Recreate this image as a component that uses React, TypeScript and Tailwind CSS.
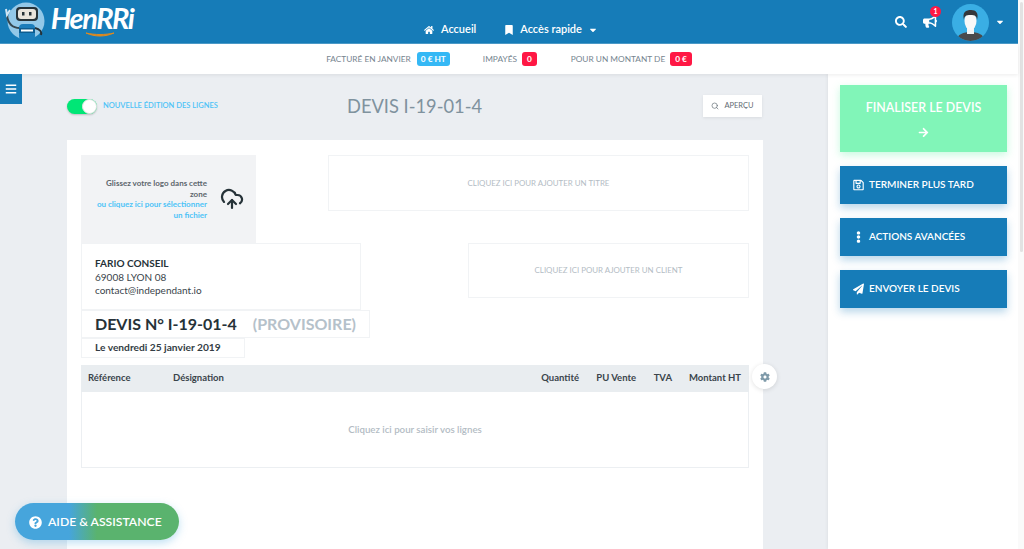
import { CloudUpload, Search } from 'lucide-react';
import {
  FaArrowRight,
  FaBars,
  FaBookmark,
  FaBullhorn,
  FaCaretDown,
  FaCog,
  FaEllipsisV,
  FaHome,
  FaPaperPlane,
  FaQuestionCircle,
  FaRegSave,
  FaSearch,
} from 'react-icons/fa';

const COLUMNS = [
  { label: 'Quantité', width: 'w-[58px]' },
  { label: 'PU Vente', width: 'w-[57px]' },
  { label: 'TVA', width: 'w-[36px]' },
  { label: 'Montant HT', width: 'w-[69px]' },
];

const ACTIONS = [
  { icon: FaRegSave, label: 'TERMINER PLUS TARD' },
  { icon: FaEllipsisV, label: 'ACTIONS AVANCÉES' },
  { icon: FaPaperPlane, label: 'ENVOYER LE DEVIS' },
];

function RobotLogo() {
  return (
    <svg viewBox="0 0 46 42" className="w-[46px] h-[42px] shrink-0">
      <circle cx="25" cy="20" r="18.500" fill="#93c8e8" />
      <path d="M6 14 C7 24 12 27 19 27" fill="none" stroke="#37474f" strokeWidth="2" />
      <path d="M5 8 L6 14 L9 9" fill="none" stroke="#cfe6f5" strokeWidth="2" />
      <path d="M34 27 C39 28 41 31 40 34" fill="none" stroke="#263238" strokeWidth="2" />
      <rect x="15" y="6" width="22" height="14" rx="4" fill="#263238" />
      <rect x="17" y="8" width="18" height="10" rx="3" fill="#e8e4dc" />
      <rect x="21" y="11" width="2.500" height="3.500" fill="#263238" />
      <rect x="28" y="11" width="2.500" height="3.500" fill="#263238" />
      <rect x="18" y="23" width="16" height="16" rx="4" fill="#1b7dbb" />
      <rect x="18" y="27" width="16" height="5" fill="#0e5d91" />
      <rect x="20" y="28.500" width="12" height="2" fill="#ffffff" />
    </svg>
  );
}

function Avatar() {
  return (
    <svg viewBox="0 0 37 37" className="w-[37px] h-[37px] rounded-full">
      <rect width="37" height="37" fill="#3aaee4" />
      <path d="M4 37 C5 30 12 28 18.500 28 C25 28 32 30 33 37 Z" fill="#4a4a4c" />
      <rect x="15" y="23" width="7" height="7" fill="#f4f4f4" />
      <ellipse cx="18.500" cy="17" rx="6" ry="9" fill="#f8f8f8" />
      <path d="M12 16 C10 8 14 6 19 6 C24 6 27 9 25 16 C25 12 23 11 18.500 11 C14 11 12 12 12 16 Z" fill="#33373b" />
    </svg>
  );
}

function TopBar() {
  return (
    <header className="relative flex h-[44px] shrink-0 items-center bg-[#167cb8] border-b border-[#4d9ccb] pl-[1px] pr-[14px] text-white">
      <RobotLogo />
      <span className="ml-[5px] -mt-[4px] flex w-[80px] shrink-0 flex-col items-center font-['Lato',sans-serif] text-[29px] leading-[32px] font-bold italic tracking-[-1.500px] whitespace-nowrap">
        <span>HenRRi</span>
        <svg viewBox="0 0 30 5" className="-mt-[2px] ml-[16px] w-[30px] h-[5px]">
          <path d="M1 1 C10 5 20 5 29 1 C20 3 10 3 1 1 Z" fill="#e08a1e" stroke="#e08a1e" />
        </svg>
      </span>

      <nav className="ml-[292px] mt-[16px] flex items-center text-[11px] font-semibold">
        <FaHome className="w-[10px] h-[10px]" />
        <span className="ml-[7px]">Accueil</span>
        <FaBookmark className="ml-[29px] w-[8px] h-[10px]" />
        <span className="ml-[7px]">Accès rapide</span>
        <FaCaretDown className="ml-[7px] w-[8px] h-[10px]" />
      </nav>

      <div className="ml-auto flex items-center">
        <FaSearch className="w-[12px] h-[12px]" />
        <span className="relative ml-[16px]">
          <FaBullhorn className="w-[14px] h-[13px]" />
          <span className="absolute -top-[9px] left-[7px] flex h-[11px] w-[11px] items-center justify-center rounded-full bg-[#ff1744] text-[7px] font-bold">
            1
          </span>
        </span>
        <span className="ml-[15px] mt-[1px]">
          <Avatar />
        </span>
        <FaCaretDown className="ml-[7px] w-[8px] h-[10px]" />
      </div>
    </header>
  );
}

function StatsBar() {
  return (
    <div className="relative z-10 flex h-[30px] shrink-0 items-center justify-center bg-white text-[8.300px] text-[#76858f] shadow-[0_1px_4px_rgba(0,0,0,0.08)]">
      <span>FACTURÉ EN JANVIER</span>
      <span className="ml-[6px] rounded-[3px] bg-[#35b8f5] px-[4px] py-[2px] font-bold text-white leading-[10px]">0 € HT</span>
      <span className="ml-[33px]">IMPAYÉS</span>
      <span className="ml-[5px] rounded-[3px] bg-[#ff1744] px-[5px] py-[2px] font-bold text-white leading-[10px]">0</span>
      <span className="ml-[34px]">POUR UN MONTANT DE</span>
      <span className="ml-[5px] rounded-[3px] bg-[#ff1744] px-[5px] py-[2px] font-bold text-white leading-[10px]">0 €</span>
    </div>
  );
}

function Toolbar() {
  return (
    <div className="flex h-[66px] w-[763px] shrink-0 items-center pl-[67px]">
      <div className="-mt-[2px] flex w-[280px] items-center">
        <span className="relative h-[15px] w-[30px] rounded-full bg-[#00e676] shadow-[0_1px_2px_rgba(0,0,0,0.2)]">
          <span className="absolute right-0 top-0 h-[15px] w-[15px] rounded-full border border-[#e4e4e4] bg-white" />
        </span>
        <span className="ml-[6px] text-[7.500px] font-semibold text-[#4dc3f7]">NOUVELLE ÉDITION DES LIGNES</span>
      </div>
      <h1 className="-mt-[1px] w-[356px] text-[18.300px] text-[#7f929e]">DEVIS I-19-01-4</h1>
      <button className="-mt-[2px] flex h-[22px] w-[59px] items-center justify-center gap-[5px] bg-white text-[7.500px] text-[#5f6b73] shadow-[0_1px_3px_rgba(0,0,0,0.08)]">
        <Search className="w-[8px] h-[8px]" strokeWidth={2} />
        APERÇU
      </button>
    </div>
  );
}

function QuoteCard() {
  return (
    <div className="relative ml-[67px] w-[696px] flex-1 bg-white px-[14px] pt-[15px]">
      <div className="flex items-start">
        <div className="flex h-[88px] w-[175px] items-center bg-[#f2f3f5] pl-[14px]">
          <div className="w-[112px] text-right text-[8px] font-bold leading-[10.500px]">
            <p className="text-[#5d666d]">Glissez votre logo dans cette zone</p>
            <p className="text-[#4dc3f7]">ou cliquez ici pour sélectionner un fichier</p>
          </div>
          <CloudUpload className="ml-[13px] w-[24px] h-[24px] text-[#263238]" strokeWidth={2.200} />
        </div>
        <div className="ml-[72px] flex h-[56px] w-[421px] items-center justify-center border border-[#f1f3f5] pt-[2px] text-[7.900px] text-[#b3bcc4]">
          CLIQUEZ ICI POUR AJOUTER UN TITRE
        </div>
      </div>

      <div className="flex items-start justify-between">
        <div className="h-[67px] w-[280px] border border-[#f1f3f5] pl-[13px] pt-[13px] text-[10px] leading-[13.500px] text-[#3a444b]">
          <p className="font-bold text-[#263238]">FARIO CONSEIL</p>
          <p>69008 LYON 08</p>
          <p>contact@independant.io</p>
        </div>
        <div className="flex h-[55px] w-[281px] items-center justify-center border border-[#f1f3f5] text-[7.900px] text-[#b3bcc4]">
          CLIQUEZ ICI POUR AJOUTER UN CLIENT
        </div>
      </div>

      <div className="flex h-[28px] w-[289px] items-center border border-[#f1f3f5] pl-[13px] text-[16px] font-bold">
        <span className="text-[#263238]">DEVIS N° I-19-01-4</span>
        <span className="ml-[16px] text-[#b5c1ca]">(PROVISOIRE)</span>
      </div>
      <div className="flex h-[20px] w-[164px] items-center border border-[#f1f3f5] pl-[13px] text-[10.200px] font-bold text-[#333d44]">
        Le vendredi 25 janvier 2019
      </div>

      <div className="mt-[7px] flex h-[27px] items-center bg-[#e9edf0] pl-[7px] pr-[8px] text-[9.500px] font-bold text-[#3a444b]">
        <span className="w-[85px]">Référence</span>
        <span className="flex-1">Désignation</span>
        {COLUMNS.map((col) => (
          <span key={col.label} className={`${col.width} text-right`}>{col.label}</span>
        ))}
      </div>
      <div className="flex h-[76px] items-center justify-center border border-t-0 border-[#eceff2] text-[9.700px] font-semibold text-[#b3bcc4]">
        Cliquez ici pour saisir vos lignes
      </div>

      <button className="absolute left-[685px] top-[224px] flex h-[25px] w-[25px] items-center justify-center rounded-full bg-white text-[#7f9aa9] shadow-[0_1px_5px_rgba(0,0,0,0.12)]">
        <FaCog className="w-[10px] h-[10px]" />
      </button>
    </div>
  );
}

function SidePanel() {
  return (
    <aside className="w-[190px] shrink-0 bg-white pl-[12px] pr-[11px] pt-[11px] shadow-[-1px_0_3px_rgba(0,0,0,0.05)]">
      <button className="flex h-[67px] w-[167px] flex-col items-center justify-center gap-[12px] bg-[#81f5b8] text-[12.400px] leading-[15px] font-semibold text-white shadow-[0_3px_8px_rgba(129,245,184,0.45)]">
        FINALISER LE DEVIS
        <FaArrowRight className="w-[11px] h-[11px]" />
      </button>
      <div className="mt-[14px] flex flex-col gap-[14px]">
        {ACTIONS.map((action) => (
          <button
            key={action.label}
            className="flex h-[38px] w-[167px] items-center bg-[#167cb8] pb-[1px] pl-[13px] text-[10px] font-semibold text-white shadow-[0_4px_8px_rgba(22,124,184,0.3)]"
          >
            <action.icon className="w-[11px] h-[12px]" />
            <span className="ml-[5px]">{action.label}</span>
          </button>
        ))}
      </div>
    </aside>
  );
}

export default function App() {
  return (
    <div className="relative flex h-[549px] w-[1024px] overflow-hidden bg-[#fdfdfd] font-['Lato',sans-serif]">
      <div className="flex w-[1018px] shrink-0 flex-col">
        <TopBar />
        <StatsBar />
        <div className="relative flex min-h-0 flex-1">
          <button className="absolute left-0 top-0 z-10 flex h-[30px] w-[22px] items-center justify-center bg-[#167cb8] text-white">
            <FaBars className="w-[12px] h-[12px]" />
          </button>
          <main className="flex w-[828px] shrink-0 flex-col bg-[#ebeef2]">
            <Toolbar />
            <QuoteCard />
          </main>
          <SidePanel />
        </div>
      </div>
      <div className="relative flex-1 bg-[#fafafa]">
        <div className="absolute left-[2px] top-[2px] h-[250px] w-[3px] rounded-full bg-[#e2e2e2]" />
      </div>

      <button className="absolute left-[15px] top-[503px] flex h-[37px] w-[164px] items-center rounded-full bg-[linear-gradient(90deg,#46a5dc_33%,#5ab36e_50%)] pl-[14px] pt-[1px] text-[12.200px] font-semibold text-white shadow-[0_3px_8px_rgba(70,165,220,0.35)]">
        <FaQuestionCircle className="w-[13px] h-[13px]" />
        <span className="ml-[6px]">AIDE &amp; ASSISTANCE</span>
      </button>
    </div>
  );
}
